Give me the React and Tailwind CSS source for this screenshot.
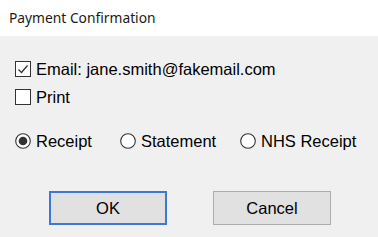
import React from 'react';

const Check = ({ checked }) => (
    <span className="w-[16px] h-[16px] border border-[#333333] bg-white flex items-center justify-center shrink-0">
        {checked && (
            <svg width="12" height="12" viewBox="0 0 12 12">
                <path d="M1.5 6.5 L4.5 9.5 L10.5 2.5" fill="none" stroke="#333333" strokeWidth="1.3" />
            </svg>
        )}
    </span>
);

const Radio = ({ checked }) => (
    <svg width="16" height="16" viewBox="0 0 16 16" className="shrink-0">
        <circle cx="8" cy="8" r="7.3" fill="white" stroke="#333333" strokeWidth="1.1" />
        {checked && <circle cx="8" cy="8" r="4.3" fill="#333333" />}
    </svg>
);

const App = () => {
    return (
        <div className="w-[378px] h-[237px] bg-[#f0f0f0] flex flex-col">
            <div className="h-[36px] bg-white flex items-center pl-[9px] text-[13.8px] text-[#1a1a1a] font-['Noto_Sans',sans-serif]">
                Payment Confirmation
            </div>

            <div className="flex flex-col pl-[15px] pt-[25px] text-[16.5px] text-black font-['Liberation_Sans',Arial,sans-serif]">
                <label className="flex items-center gap-[5px] h-[16px]">
                    <Check checked />
                    <span>Email: jane.smith@fakemail.com</span>
                </label>
                <label className="flex items-center gap-[5px] h-[16px] mt-[12px]">
                    <Check />
                    <span>Print</span>
                </label>
                <div className="flex items-center h-[16px] mt-[28px]">
                    <label className="flex items-center gap-[5px] w-[105px]">
                        <Radio checked />
                        <span>Receipt</span>
                    </label>
                    <label className="flex items-center gap-[5px] w-[120px]">
                        <Radio />
                        <span>Statement</span>
                    </label>
                    <label className="flex items-center gap-[5px]">
                        <Radio />
                        <span>NHS Receipt</span>
                    </label>
                </div>
            </div>

            <div className="flex pl-[49px] gap-[46px] mt-[42px] text-[16.5px] font-['Liberation_Sans',Arial,sans-serif]">
                <button className="w-[118px] h-[34px] bg-[#e1e1e1] border-2 border-[#3b78d8] text-black">OK</button>
                <button className="w-[118px] h-[34px] bg-[#e1e1e1] border border-[#adadad] text-black">Cancel</button>
            </div>
        </div>
    );
};

export default App;
